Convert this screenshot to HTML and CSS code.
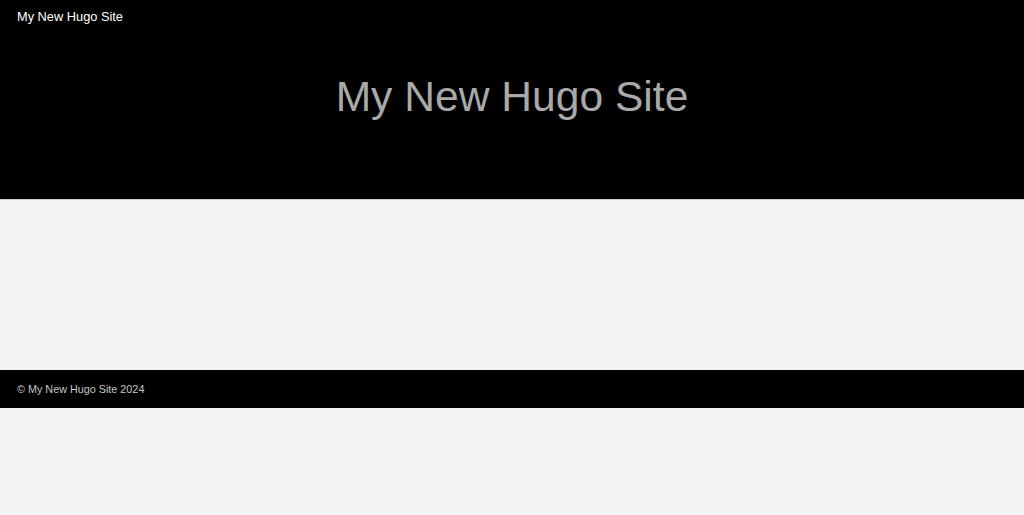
FILE: index.html
```html
<!DOCTYPE html>
<html lang="en">
<head>
  <meta charset="UTF-8" />
  <title>My New Hugo Site</title>
  <link rel="stylesheet" href="styles.css">
</head>
<body>

  <header class="site-header">
    <nav class="nav">
      <a class="nav-title" href="#">My New Hugo Site</a>
    </nav>
    <h1 class="hero-title">My New Hugo Site</h1>
  </header>

  <main class="content"></main>

  <footer class="site-footer">
    <p>&copy; My New Hugo Site 2024</p>
  </footer>

</body>
</html>
```

FILE: styles.css
```css
/* Base */
body {
  margin: 0;
  font-family: 'Liberation Sans', Arial, sans-serif;
  background-color: #f3f3f3;
  color: #333;
}

.site-header {
  background-color: #000;
  height: 199px;
  border-bottom: 1px solid #cfcfcf;
}

.nav {
  padding: 7px 17px 0;
}

.nav-title {
  color: #fff;
  font-size: 12.8px;
  text-decoration: none;
}

.hero-title {
  margin: 47px 0 0;
  text-align: center;
  font-size: 42.6px;
  font-weight: 400;
  color: #a9a9a9;
}

.content {
  height: 170px;
}

/* Footer */
.site-footer {
  background-color: #000;
  height: 38px;
  padding: 0 17px;
  display: flex;
  align-items: center;
}

.site-footer p {
  margin: 0;
  font-size: 10.8px;
  color: #c8c8c8;
}
```
